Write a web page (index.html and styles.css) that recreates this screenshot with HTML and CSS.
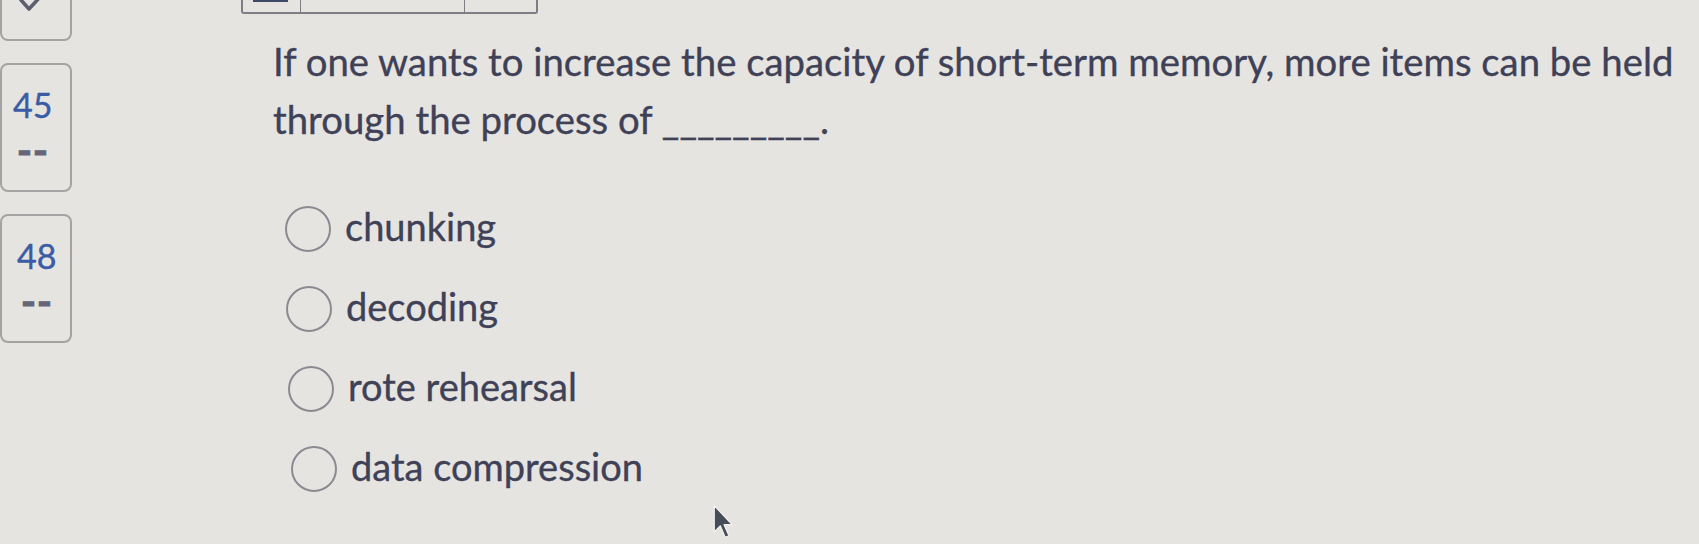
FILE: index.html
```html
<!DOCTYPE html>
<html lang="en">
<head>
<meta charset="utf-8">
<title>Question</title>
<link rel="stylesheet" href="styles.css">
</head>
<body>
<div class="page">
  <aside class="nav">
    <div class="card card-first">
      <svg class="check" viewBox="0 0 26 12" width="26" height="12"><path d="M3 0 L11 9 L23 -4" fill="none" stroke="#5e5f6e" stroke-width="3.6" stroke-linecap="round" stroke-linejoin="round"/></svg>
    </div>
    <div class="card">
      <span class="num">45</span>
      <span class="dash">--</span>
    </div>
    <div class="card card-third">
      <span class="num">48</span>
      <span class="dash">--</span>
    </div>
  </aside>
  <main class="content">
    <div class="segbar">
      <div class="seg seg-a"><span class="seg-mark"></span></div>
      <div class="seg seg-b"></div>
      <div class="seg seg-c"></div>
    </div>
    <div class="question">
      <p class="qtext">If one wants to increase the capacity of short-term memory, more items can be held through the process of _________.</p>
      <ul class="options">
        <li class="option o1"><span class="radio"></span><span class="label">chunking</span></li>
        <li class="option o2"><span class="radio"></span><span class="label">decoding</span></li>
        <li class="option o3"><span class="radio"></span><span class="label">rote rehearsal</span></li>
        <li class="option o4"><span class="radio"></span><span class="label">data compression</span></li>
      </ul>
    </div>
  </main>
  <svg class="cursor" viewBox="0 0 20 32" width="22" height="36"><path d="M2 1 L2 25 L7.5 19.5 L12 30 L15.5 28.5 L11 18.5 L18.5 18.5 Z" fill="#464c58" stroke="#f2f1ef" stroke-width="1.2" stroke-linejoin="round"/></svg>
</div>
</body>
</html>
```

FILE: styles.css
```css
* { box-sizing: border-box; }
html, body {
  margin: 0;
  padding: 0;
  background: #e6e4e1;
}
body {
  width: 1699px;
  height: 544px;
  overflow: hidden;
  font-family: Lato, "Noto Sans", "Liberation Sans", sans-serif;
  color: #3f4157;
}
.page {
  position: relative;
  display: grid;
  grid-template-columns: 72px 1fr;
  height: 544px;
}
.nav {
  display: flex;
  flex-direction: column;
  gap: 22px;
}
.card {
  width: 72px;
  height: 129px;
  border: 2px solid #a4a3a4;
  border-radius: 8px;
  display: flex;
  flex-direction: column;
  align-items: flex-start;
  padding-top: 20px;
  padding-left: 11px;
}
.card-third { padding-left: 15px; }
.card-first {
  height: 41px;
  border-top: none;
  border-top-left-radius: 0;
  border-top-right-radius: 0;
  padding-top: 0;
  padding-left: 16px;
}
.check {
  display: block;
}
.num {
  font-size: 34px;
  line-height: 40px;
  color: #3a5ca4;
  -webkit-text-stroke: 0.4px #3a5ca4;
}
.dash {
  margin-top: 12px;
  margin-left: 4px;
  font-size: 40px;
  line-height: 26px;
  font-weight: 700;
  color: #65667a;
  -webkit-text-stroke: 1.2px #65667a;
  letter-spacing: 1px;
}
.content {
  padding-left: 169px;
  display: flex;
  flex-direction: column;
}
.segbar {
  display: flex;
  height: 14px;
  border: 2px solid #7d7d83;
  border-top: none;
  border-radius: 0 0 3px 3px;
  width: 297px;
}
.seg {
  height: 100%;
  position: relative;
}
.seg-a { width: 58px; border-right: 1.5px solid #7d7d83; }
.seg-b { width: 164px; border-right: 1.5px solid #7d7d83; }
.seg-c { flex: 1; }
.seg-mark {
  position: absolute;
  left: 10px;
  top: 0;
  width: 35px;
  height: 2px;
  background: #3e4a66;
}
.question {
  padding-left: 32px;
  margin-top: 18px;
}
.qtext {
  margin: 0;
  font-size: 38.3px;
  line-height: 58px;
  width: 1420px;
  -webkit-text-stroke: 0.35px #3f4157;
}
.options {
  list-style: none;
  margin: 58px 0 0 12px;
  padding: 0;
  display: flex;
  flex-direction: column;
  gap: 34px;
}
.option {
  display: flex;
  align-items: center;
  height: 46px;
}
.o2 { margin-left: 1px; }
.o3 { margin-left: 3px; }
.o4 { margin-left: 6px; }
.radio {
  width: 46px;
  height: 46px;
  border: 2px solid #8b8a90;
  border-radius: 50%;
  flex: none;
}
.label {
  margin-left: 14px;
  font-size: 38px;
  line-height: 46px;
  position: relative;
  top: -3px;
  -webkit-text-stroke: 0.35px #3f4157;
}
.cursor {
  position: absolute;
  left: 712px;
  top: 504px;
}
```
